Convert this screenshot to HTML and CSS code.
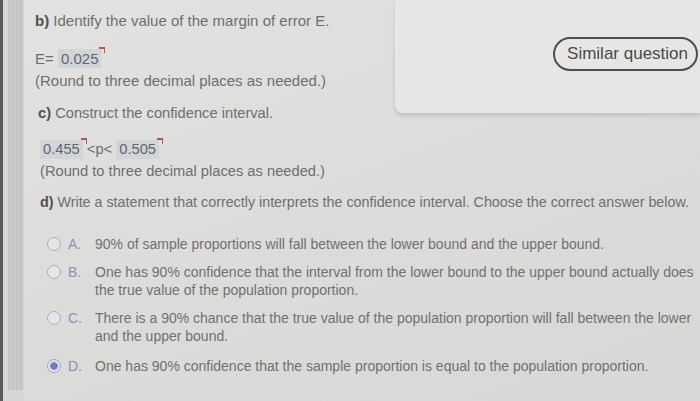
FILE: index.html
```html
<!DOCTYPE html>
<html>
<head>
<meta charset="utf-8">
<link rel="stylesheet" href="styles.css">
</head>
<body>
<div class="screen">
  <div class="edge"><div class="edge-bar"></div></div>
  <div class="content">
    <div class="top">
      <div class="top-left">
        <p class="line q-b"><b>b)</b> Identify the value of the margin of error E.</p>
        <p class="line ans-e">E= <span class="box">0.025</span></p>
        <p class="line note">(Round to three decimal places as needed.)</p>
      </div>
      <div class="panel">
        <button class="similar">Similar question</button>
      </div>
    </div>
    <div class="part-c">
      <p class="line q-c"><b>c)</b> Construct the confidence interval.</p>
      <p class="line interval"><span class="box">0.455</span> <span class="lt">&lt;p&lt;</span> <span class="box">0.505</span></p>
      <p class="line note2">(Round to three decimal places as needed.)</p>
    </div>
    <div class="part-d">
      <p class="line q-d"><b>d)</b> Write a statement that correctly interprets the confidence interval. Choose the correct answer below.</p>
    </div>
    <ul class="options">
      <li class="opt"><span class="radio"></span><span class="letter">A.</span><span class="otext">90% of sample proportions will fall between the lower bound and the upper bound.</span></li>
      <li class="opt"><span class="radio"></span><span class="letter">B.</span><span class="otext">One has 90% confidence that the interval from the lower bound to the upper bound actually does<br>the true value of the population proportion.</span></li>
      <li class="opt"><span class="radio"></span><span class="letter">C.</span><span class="otext">There is a 90% chance that the true value of the population proportion will fall between the lower<br>and the upper bound.</span></li>
      <li class="opt opt-d"><span class="radio checked"></span><span class="letter">D.</span><span class="otext">One has 90% confidence that the sample proportion is equal to the population proportion.</span></li>
    </ul>
  </div>
</div>
</body>
</html>
```
FILE: styles.css
```css
html, body {
  margin: 0;
  padding: 0;
  width: 700px;
  height: 401px;
  overflow: hidden;
}
body {
  font-family: "Liberation Sans", Arial, sans-serif;
  font-size: 14px;
  color: #6e6e6e;
  background: linear-gradient(160deg, #e2e3e1 0%, #dcdddb 50%, #d7d8d6 100%);
}
.screen {
  display: flex;
  height: 401px;
}
.edge {
  width: 24px;
  flex: none;
  border-left: 3px solid #5a5a5a;
  box-sizing: border-box;
  padding: 0 0 11px 5px;
  display: flex;
  background: #d6d6d4;
}
.edge-bar {
  width: 15px;
  background: repeating-linear-gradient(90deg, #c4c4c2 0 2px, #cbcbc9 2px 4px);
}
.content {
  flex: 1;
  min-width: 0;
}
.line {
  margin: 0;
  line-height: 20px;
  white-space: nowrap;
}
b {
  color: #505050;
}
.top {
  display: flex;
  justify-content: space-between;
}
.top-left {
  padding: 11px 0 0 11px;
  font-size: 15px;
}
.ans-e {
  margin-top: 18px;
}
.note {
  margin-top: 2px;
}
.box {
  display: inline-block;
  position: relative;
  background: #d2d5d7;
  color: #5f6670;
  line-height: 19px;
  padding: 0 3px;
}
.box::after {
  content: "";
  position: absolute;
  top: -2px;
  right: -4px;
  width: 5px;
  height: 4px;
  border-top: 2px solid #c0504d;
  border-right: 1px solid #c0504d;
}
.panel {
  width: 305px;
  height: 113px;
  background: #e6e7e5;
  border-bottom-left-radius: 8px;
  box-shadow: 0 3px 4px rgba(0, 0, 0, 0.12);
  box-sizing: border-box;
  padding: 37px 2px 0 0;
  display: flex;
  justify-content: flex-end;
  align-items: flex-start;
}
.similar {
  font-family: "Liberation Sans", Arial, sans-serif;
  font-size: 17px;
  color: #4a4a4a;
  background: transparent;
  border: 2px solid #4e4e4e;
  border-radius: 18px;
  height: 34px;
  padding: 0 8px 0 12px;
}
.part-c {
  margin-top: -10px;
  padding-left: 14px;
  font-size: 14.7px;
}
.interval {
  margin-top: 16px;
  padding-left: 2px;
}
.lt {
  color: #6e6e6e;
}
.note2 {
  margin-top: 2px;
  padding-left: 2px;
}
.part-d {
  padding-left: 16px;
  margin-top: 11px;
  font-size: 14.3px;
}
.options {
  list-style: none;
  margin: 23px 0 0 0;
  padding: 0 0 0 23px;
  display: flex;
  flex-direction: column;
  gap: 10px;
}
.opt {
  display: flex;
  align-items: flex-start;
  line-height: 18px;
  color: #707070;
}
.opt-d {
  margin-top: 2px;
}
.radio {
  flex: none;
  width: 14px;
  height: 14px;
  box-sizing: border-box;
  border: 1.5px solid #a9adbf;
  border-radius: 50%;
  margin: 2px 7px 0 0;
  background: #e4e5e6;
}
.radio.checked {
  border-color: #9ea2d0;
  background: radial-gradient(circle, #777cc6 0 3.5px, #e4e5ea 4px);
}
.letter {
  flex: none;
  width: 27px;
  color: #8891b3;
}
.otext {
  white-space: nowrap;
}
```
